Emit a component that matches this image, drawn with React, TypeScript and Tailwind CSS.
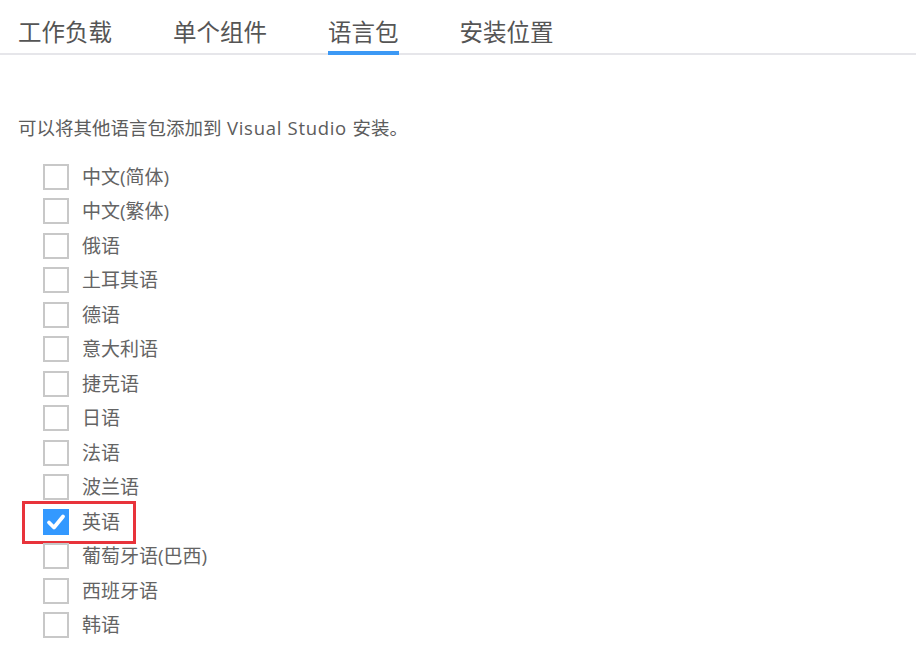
const tabs = ['工作负载', '单个组件', '语言包', '安装位置'];

const languages = [
  { name: '中文(简体)', checked: false },
  { name: '中文(繁体)', checked: false },
  { name: '俄语', checked: false },
  { name: '土耳其语', checked: false },
  { name: '德语', checked: false },
  { name: '意大利语', checked: false },
  { name: '捷克语', checked: false },
  { name: '日语', checked: false },
  { name: '法语', checked: false },
  { name: '波兰语', checked: false },
  { name: '英语', checked: true, highlight: true },
  { name: '葡萄牙语(巴西)', checked: false },
  { name: '西班牙语', checked: false },
  { name: '韩语', checked: false },
];

const font = {
  fontFamily: '"Open Sans", "Noto Sans CJK SC", sans-serif',
};

function Checkbox({ checked }: { checked: boolean }) {
  if (checked) {
    return (
      <div className="flex h-[26px] w-[26px] shrink-0 items-center justify-center bg-[#3399ff]">
        <svg width="20" height="20" viewBox="0 0 20 20" fill="none">
          <polyline
            points="3,10.5 8,15.5 17,4.5"
            stroke="white"
            strokeWidth="3.8"
            strokeLinecap="round"
            strokeLinejoin="round"
          />
        </svg>
      </div>
    );
  }
  return <div className="h-[26px] w-[26px] shrink-0 border-2 border-[#c8c8c8] bg-white" />;
}

export default function App() {
  return (
    <div className="min-h-[669px] w-full bg-white" style={font}>
      <div className="flex gap-[61px] border-b-2 border-[#e6e6ea] pl-[18px]">
        {tabs.map((t, i) => (
          <div
            key={t}
            className={
              'mb-[-2px] border-b-4 pt-[16px] pb-[3px] text-[23.5px] leading-[32px] text-[#555555] ' +
              (i === 2 ? 'border-[#3c99f5]' : 'border-transparent')
            }
          >
            {t}
          </div>
        ))}
      </div>

      <div className="pl-[18px]">
        <p className="mt-[60px] text-[18.5px] leading-[26px] text-[#5c5c5c]">
          可以将其他语言包添加到<span className="tracking-[0.7px]"> Visual Studio </span>安装。
        </p>

        <ul className="mt-[18.5px] pl-[25px]">
          {languages.map((l) => (
            <li key={l.name} className="relative flex h-[34.5px] items-center gap-[13px]">
              <Checkbox checked={l.checked} />
              <span className="text-[19px] leading-[24px] text-[#646464]">{l.name}</span>
              {l.highlight && (
                <div className="absolute -left-[21px] -top-[4px] h-[43px] w-[114px] border-[3px] border-[#e8333b]" />
              )}
            </li>
          ))}
        </ul>
      </div>
    </div>
  );
}
